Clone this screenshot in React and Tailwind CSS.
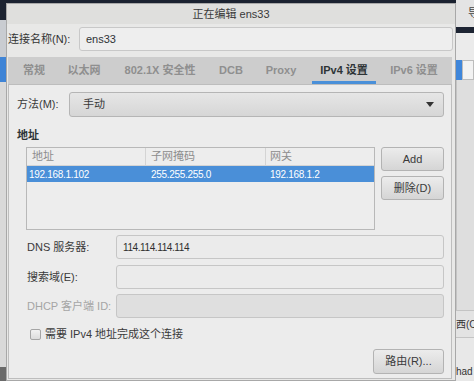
import React from "react";

const tabs = [
  { name: "常规", w: "w-[52px]" },
  { name: "以太网", w: "w-[48px]" },
  { name: "802.1X 安全性", w: "w-[104px]" },
  { name: "DCB", w: "w-[38px]" },
  { name: "Proxy", w: "w-[62px]" },
  { name: "IPv4 设置", w: "w-[64px]", active: true },
  { name: "IPv6 设置", w: "w-[76px]" },
];

function Button({ label, className }) {
  return (
    <div
      className={`flex items-center justify-center rounded-[3px] border border-[#b3b3b3] bg-gradient-to-b from-[#ececec] to-[#d5d5d5] text-[#3a3a3a] ${className}`}
    >
      {label}
    </div>
  );
}

function Field({ label, value, disabled }) {
  return (
    <div className="flex items-center ml-[10px]">
      <div className={`w-[89px] ${disabled ? "text-[#a5a5a5]" : "text-[#3a3a3a]"}`}>{label}</div>
      <div
        className={`w-[328px] h-[24px] flex items-center px-[6px] rounded-[3px] border border-[#c6c6c6] ${
          disabled ? "bg-[#dfdfdf]" : "bg-[#ebebeb]"
        }`}
      >
        <span className="text-[10px] tracking-[-0.4px] text-[#2e2e2e]">{value}</span>
      </div>
    </div>
  );
}

function App() {
  return (
    <div className="w-[474px] h-[381px] flex overflow-hidden bg-[#1b2230] font-['Liberation_Sans','Noto_Sans_CJK_SC',sans-serif] text-[11px] text-[#2e3436]">
      {/* left edge of the desktop behind */}
      <div className="w-[6px] flex flex-col shrink-0">
        <div className="h-[20px] bg-[#1c2331]" />
        <div className="h-[37px] bg-[#c9ccd1]" />
        <div className="h-[25px] bg-[#3f84d6]" />
        <div className="flex-1 bg-[#d9d9d9]" />
        <div className="h-[14px] bg-[#6a6a6a]" />
      </div>

      {/* dialog */}
      <div className="mt-[3px] w-[450px] h-[378px] shrink-0 flex flex-col bg-[#e8e8e7] border border-[#a8a8a8]">
        <div className="h-[20px] flex items-center justify-center bg-[#dfdfdd] text-[#3a3a3a]">
          正在编辑 ens33
        </div>

        <div className="mt-[3px] flex items-center pl-[1px] pr-[2px]">
          <div className="w-[71px] text-[#333]">连接名称(N):</div>
          <div className="flex-1 h-[24px] flex items-center px-[6px] rounded-[3px] border border-[#c8c8c8] bg-[#eeeeee]">
            ens33
          </div>
        </div>

        {/* notebook */}
        <div className="mt-[6px] ml-[1px] mr-[3px] mb-[1px] flex-1 flex flex-col">
          <div className="h-[27px] flex bg-[#cdcdcd]">
            {tabs.map((t) => (
              <div
                key={t.name}
                className={`${t.w} relative flex items-center justify-center font-bold ${
                  t.active ? "text-[#2e3436]" : "text-[#8f8f8f]"
                }`}
              >
                {t.name}
                {t.active && <div className="absolute left-0 right-0 bottom-0 h-[3px] bg-[#4a90d9]" />}
              </div>
            ))}
          </div>

          <div className="flex-1 flex flex-col bg-[#ececec] border border-[#bdbdbd] pt-[7px] pl-[8px] pr-[7px]">
            <div className="flex items-center">
              <div className="w-[52px] text-[#3a3a3a]">方法(M):</div>
              <div className="flex-1 h-[25px] flex items-center justify-between pl-[13px] pr-[9px] rounded-[3px] border border-[#b5b5b5] bg-gradient-to-b from-[#e6e6e6] to-[#d6d6d6] text-[#3a3a3a]">
                <span>手动</span>
                <svg width="8" height="5" viewBox="0 0 8 5">
                  <path d="M0 0 L8 0 L4 5 Z" fill="#333" />
                </svg>
              </div>
            </div>

            <div className="mt-[10px] h-[16px] flex items-center font-bold text-[#2e3436]">地址</div>

            <div className="mt-[4px] ml-[9px] flex">
              <div className="w-[349px] h-[83px] border border-[#b8b8b8] bg-[#ededed] flex flex-col">
                <div className="h-[18px] flex text-[#8c8c8c] border-b border-[#d4d4d4]">
                  <div className="w-[119px] pl-[5px] flex items-center border-r border-[#d4d4d4]">地址</div>
                  <div className="w-[120px] pl-[5px] flex items-center border-r border-[#d4d4d4]">子网掩码</div>
                  <div className="flex-1 pl-[4px] flex items-center">网关</div>
                </div>
                <div className="h-[16px] flex bg-[#4a8fd8] text-white text-[10px] tracking-[-0.3px]">
                  <div className="w-[119px] pl-[2px] flex items-center">192.168.1.102</div>
                  <div className="w-[120px] pl-[5px] flex items-center">255.255.255.0</div>
                  <div className="flex-1 pl-[4px] flex items-center">192.168.1.2</div>
                </div>
              </div>
              <div className="ml-[6px] flex flex-col gap-[5px]">
                <Button label="Add" className="w-[63px] h-[24px]" />
                <Button label="删除(D)" className="w-[63px] h-[24px]" />
              </div>
            </div>

            <div className="mt-[5px]">
              <Field label="DNS 服务器:" value="114.114.114.114" />
            </div>
            <div className="mt-[6px]">
              <Field label="搜索域(E):" value="" />
            </div>
            <div className="mt-[5px]">
              <Field label="DHCP 客户端 ID:" value="" disabled />
            </div>

            <div className="mt-[8px] ml-[13px] flex items-center gap-[4px]">
              <div className="w-[11px] h-[11px] rounded-[2px] border border-[#a5a5a5] bg-gradient-to-b from-[#f2f2f2] to-[#dcdcdc]" />
              <span className="text-[#3a3a3a]">需要 IPv4 地址完成这个连接</span>
            </div>

            <div className="mt-[6px] flex justify-end">
              <Button label="路由(R)..." className="w-[71px] h-[25px]" />
            </div>
          </div>
        </div>
      </div>

      {/* right edge of another window */}
      <div className="flex-1 flex flex-col overflow-hidden">
        <div className="h-[27px] bg-[#e4e4e4] flex items-center pl-[12px] text-[#444] whitespace-nowrap">导</div>
        <div className="h-[6px] bg-[#1d2433]" />
        <div className="h-[27px] bg-[#ebebeb]" />
        <div className="h-[20px] flex">
          <div className="w-[6px] bg-[#3f86da]" />
          <div className="flex-1 bg-[#f2f2f2] border border-[#bcbcbc]" />
        </div>
        <div className="h-[230px] bg-[#dedede] border-l border-[#c4c4c4]" />
        <div className="h-[28px] bg-[#e3e3e3] border-t border-b border-[#c4c4c4] flex items-center text-[10px] text-[#333] whitespace-nowrap">
          西(C
        </div>
        <div className="flex-1 bg-[#e8e8e8] flex items-end text-[10px] text-[#333] whitespace-nowrap pb-[2px]">
          had
        </div>
      </div>
    </div>
  );
}

export default App;
